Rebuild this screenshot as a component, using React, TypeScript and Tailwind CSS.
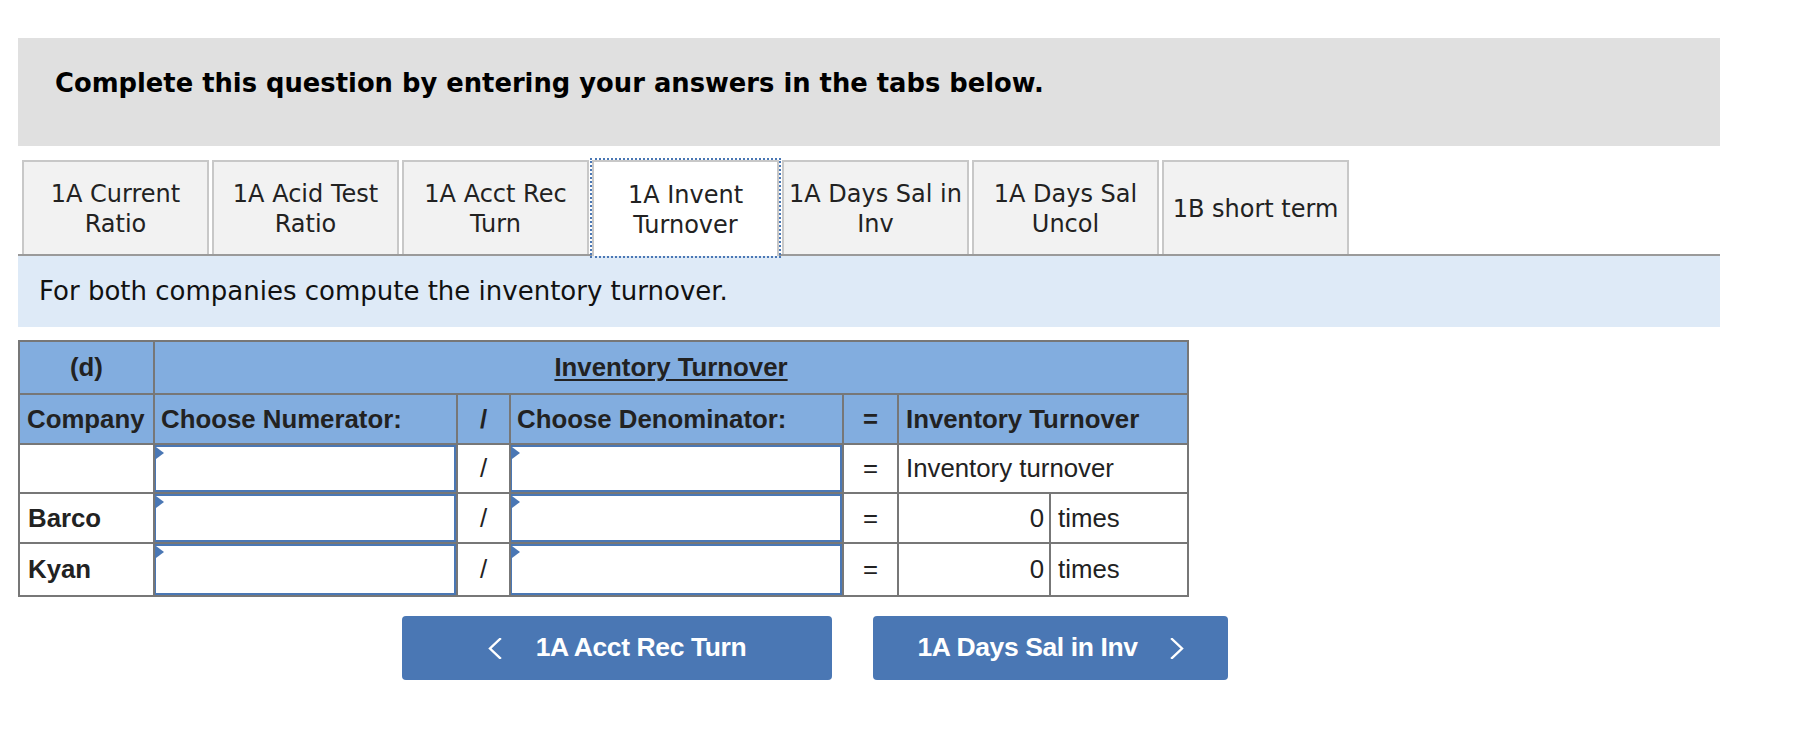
const tabs = [
  ["1A Current", "Ratio"],
  ["1A Acid Test", "Ratio"],
  ["1A Acct Rec", "Turn"],
  ["1A Invent", "Turnover"],
  ["1A Days Sal in", "Inv"],
  ["1A Days Sal", "Uncol"],
  ["1B short term"],
];

const verdana = { fontFamily: '"DejaVu Sans", Verdana, sans-serif' };
const arial = { fontFamily: '"Liberation Sans", Arial, sans-serif' };

function Chevron({ dir }: { dir: "left" | "right" }) {
  return (
    <svg width="14" height="21" viewBox="0 0 14 21" fill="none" stroke="currentColor" strokeWidth="2.4" strokeLinecap="square">
      {dir === "left" ? <polyline points="12,1 2,10.5 12,20" /> : <polyline points="2,1 12,10.5 2,20" />}
    </svg>
  );
}

function PickCell({ h = "h-[48px]" }: { h?: string }) {
  return (
    <td className="border-2 border-[#777] p-0">
      <div className={`relative ${h} border-2 border-l-[1.5px] border-[#4a77b4] bg-white`}>
        <span className="absolute left-0 top-0 w-0 h-0 border-y-[6px] border-y-transparent border-l-[8px] border-l-[#4a77b4]" />
      </div>
    </td>
  );
}

function Row({ name, value, h }: { name: string; value: string; h?: string }) {
  return (
    <tr>
      <td className="border-2 border-[#777] pl-[8px] font-bold">{name}</td>
      <PickCell h={h} />
      <td className="border-2 border-[#777] text-center">/</td>
      <PickCell h={h} />
      <td className="border-2 border-[#777] text-center">=</td>
      <td className="border-2 border-[#777] text-right pr-[5px]">{value}</td>
      <td className="border-2 border-[#777] pl-[7px]">times</td>
    </tr>
  );
}

export default function App() {
  return (
    <div className="w-[1802px] h-[746px] bg-white pt-[38px] pl-[18px]">
      <div className="w-[1702px]">
        <div className="h-[108px] bg-[#e0e0e0] pl-[37px] pt-[30px]" style={verdana}>
          <h1 className="text-[25.8px] leading-[30px] font-bold text-black">
            Complete this question by entering your answers in the tabs below.
          </h1>
        </div>

        <div className="mt-[14px] flex gap-[3px] pl-[4px] border-b-2 border-[#9a9a9a]" style={verdana}>
          {tabs.map((t, i) => {
            const active = i === 3;
            return (
              <div
                key={i}
                className={
                  active
                    ? "w-[187px] h-[96px] -mb-[2px] bg-white border-2 border-b-0 border-[#c8c8c8] outline-2 outline-dotted outline-[#4a77b4] flex flex-col items-center justify-center pt-[2px] text-[24px] leading-[30px] text-[#222]"
                    : "w-[187px] h-[94px] bg-[#f2f2f2] border-2 border-b-0 border-[#c8c8c8] flex flex-col items-center justify-center pt-[2px] text-[24px] leading-[30px] text-[#222]"
                }
              >
                {t.map((line) => (
                  <span key={line} className="whitespace-nowrap">{line}</span>
                ))}
              </div>
            );
          })}
        </div>

        <div className="h-[71px] bg-[#deeaf7] pl-[21px] flex items-center" style={verdana}>
          <p className="text-[26px] text-[#111]">For both companies compute the inventory turnover.</p>
        </div>

        <table className="mt-[13px] border-collapse table-fixed w-[1169px] text-[25.8px] text-[#222]" style={arial}>
          <colgroup>
            <col className="w-[135px]" />
            <col className="w-[303px]" />
            <col className="w-[53px]" />
            <col className="w-[333px]" />
            <col className="w-[55px]" />
            <col className="w-[152px]" />
            <col className="w-[138px]" />
          </colgroup>
          <thead>
            <tr className="bg-[#82addf] font-bold">
              <td className="border-2 border-[#777] h-[53px] text-center">(d)</td>
              <td colSpan={6} className="border-2 border-[#777] text-center">
                <span className="underline underline-offset-[3px]">Inventory Turnover</span>
              </td>
            </tr>
            <tr className="bg-[#82addf] font-bold">
              <td className="border-2 border-[#777] h-[50px] pl-[7px]">Company</td>
              <td className="border-2 border-[#777] pl-[6px]">Choose Numerator:</td>
              <td className="border-2 border-[#777] text-center">/</td>
              <td className="border-2 border-[#777] pl-[6px]">Choose Denominator:</td>
              <td className="border-2 border-[#777] text-center">=</td>
              <td colSpan={2} className="border-2 border-[#777] pl-[7px]">Inventory Turnover</td>
            </tr>
          </thead>
          <tbody>
            <tr>
              <td className="border-2 border-[#777]" />
              <PickCell h="h-[47px]" />
              <td className="border-2 border-[#777] text-center">/</td>
              <PickCell h="h-[47px]" />
              <td className="border-2 border-[#777] text-center">=</td>
              <td colSpan={2} className="border-2 border-[#777] pl-[7px]">Inventory turnover</td>
            </tr>
            <Row name="Barco" value="0" />
            <Row name="Kyan" value="0" h="h-[51px]" />
          </tbody>
        </table>

        <div className="mt-[19px] ml-[384px] flex gap-[41px] text-white font-bold text-[26.5px]" style={arial}>
          <button className="w-[430px] h-[64px] rounded-[4px] bg-[#4a77b4] flex items-center justify-center gap-[34px]">
            <Chevron dir="left" />
            <span className="tracking-[-0.4px]">1A Acct Rec Turn</span>
          </button>
          <button className="w-[355px] h-[64px] rounded-[4px] bg-[#4a77b4] flex items-center justify-center gap-[32px]">
            <span className="tracking-[-0.4px]">1A Days Sal in Inv</span>
            <Chevron dir="right" />
          </button>
        </div>
      </div>
    </div>
  );
}
